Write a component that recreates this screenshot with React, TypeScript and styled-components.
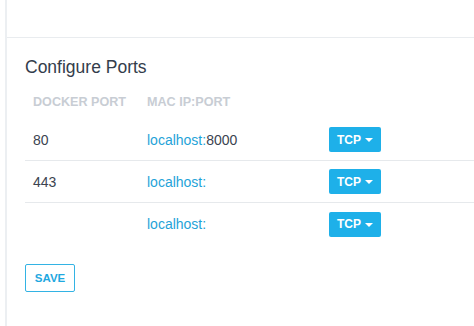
import React from "react";
import styled, { createGlobalStyle } from "styled-components";

const Global = createGlobalStyle`
  html, body { margin: 0; padding: 0; background: #fff; }
  body { font-family: "Liberation Sans", Arial, sans-serif; -webkit-font-smoothing: antialiased; }
`;

const Page = styled.div`
  width: 474px;
  height: 326px;
  overflow: hidden;
  padding-left: 5px;
  box-sizing: border-box;
`;

const Panel = styled.div`
  height: 100%;
  border-left: 2px solid #eceff2;
`;

const TopBar = styled.div`
  height: 37px;
  border-bottom: 1px solid #e9ecef;
`;

const Content = styled.div`
  padding: 18px 0 0 18px;
`;

const Title = styled.h2`
  margin: 0;
  font-size: 17.5px;
  font-weight: 400;
  color: #333d4b;
  line-height: 22px;
`;

const Table = styled.div`
  margin-top: 6px;
  display: grid;
  grid-template-columns: 114px 181px 1fr;
`;

const HeadCell = styled.div`
  font-size: 12.6px;
  font-weight: 700;
  color: #c8cdd4;
  padding: 0 8px;
  height: 35px;
  display: flex;
  align-items: center;
`;

const Cell = styled.div<{ $last?: boolean }>`
  height: 42px;
  box-sizing: border-box;
  border-bottom: ${(p) => (p.$last ? "none" : "1px solid #e6e9ec")};
  padding: 0 8px;
  display: flex;
  align-items: center;
  font-size: 14px;
  color: #3b4350;
`;

const Host = styled.span`
  color: #1fa3d8;
`;

const TcpButton = styled.button`
  margin-left: 1px;
  width: 52px;
  height: 25px;
  border: none;
  border-radius: 2px;
  background: #1eb0e9;
  color: #fff;
  font-family: "Liberation Sans", Arial, sans-serif;
  font-weight: 700;
  font-size: 12px;
  display: flex;
  align-items: center;
  justify-content: center;
  gap: 4px;
  padding: 0;
`;

const Caret = styled.span`
  width: 0;
  height: 0;
  border-left: 4px solid transparent;
  border-right: 4px solid transparent;
  border-top: 4px solid #fff;
  margin-top: 1px;
`;

const SaveButton = styled.button`
  margin-top: 19px;
  width: 50px;
  height: 28px;
  background: #fff;
  border: 1px solid #33b3e4;
  border-radius: 2px;
  color: #1fa8df;
  font-family: "Liberation Sans", Arial, sans-serif;
  font-weight: 700;
  font-size: 11.5px;
  padding: 0;
`;

const rows = [
  { port: "80", mac: "8000" },
  { port: "443", mac: "" },
  { port: "", mac: "" },
];

export default function App() {
  return (
    <Page>
      <Global />
      <Panel>
        <TopBar />
        <Content>
          <Title>Configure Ports</Title>
          <Table>
            <HeadCell>DOCKER PORT</HeadCell>
            <HeadCell>MAC IP:PORT</HeadCell>
            <HeadCell />
            {rows.map((r, i) => {
              const last = i === rows.length - 1;
              return (
                <React.Fragment key={i}>
                  <Cell $last={last}>{r.port}</Cell>
                  <Cell $last={last}>
                    <Host>localhost:</Host>
                    {r.mac}
                  </Cell>
                  <Cell $last={last}>
                    <TcpButton>
                      TCP
                      <Caret />
                    </TcpButton>
                  </Cell>
                </React.Fragment>
              );
            })}
          </Table>
          <SaveButton>SAVE</SaveButton>
        </Content>
      </Panel>
    </Page>
  );
}
